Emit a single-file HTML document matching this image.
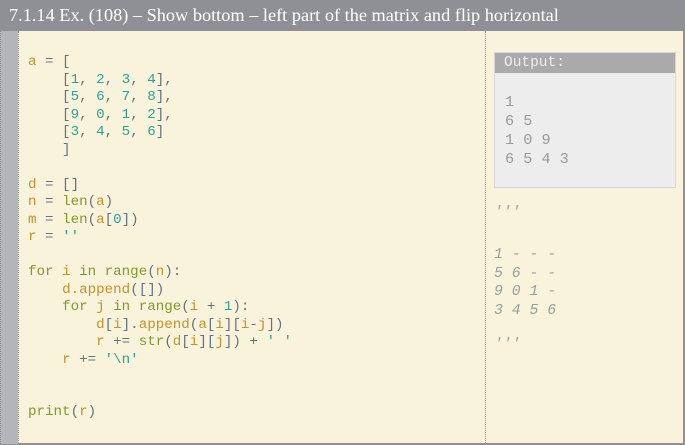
<!DOCTYPE html>
<html><head><style>
html,body{margin:0;padding:0;width:685px;height:445px;overflow:hidden;background:#fff;}
#wrap{position:absolute;left:0;top:0;width:685px;height:445px;background:#8f9095;}
#title{position:absolute;left:0;top:0;width:685px;height:31px;background:#8f9095;color:#fff;font-family:"Liberation Serif",serif;font-size:18.3px;line-height:31px;padding-left:9px;box-sizing:border-box;}
#gutter{position:absolute;left:0;top:31px;width:18px;height:413px;background:#b4b5b9;border-left:1px dotted #888;box-sizing:border-box;}
#code{position:absolute;left:18px;top:31px;width:467px;height:412px;background:#faf3dc;border-left:1px dotted #999;box-sizing:border-box;}
#right{position:absolute;left:485px;top:31px;width:198px;height:412px;background:#faf3dc;border-left:1px dotted #999;box-sizing:border-box;}
pre{margin:0;font-family:"Liberation Mono",monospace;}
#src{position:absolute;left:9px;top:23px;font-size:14.2px;line-height:17.5px;color:#5f7480;}
.k{color:#7f9a2a}.v{color:#c0922a}.n{color:#2aa198}
#out{position:absolute;left:8px;top:21px;width:182px;height:136px;background:#ededed;border:1px solid #d6d6d6;box-sizing:border-box;}
#outh{height:20px;background:#aaaaaa;color:#eee;font-family:"Liberation Mono",monospace;font-size:14.5px;line-height:20px;padding-left:9px;}
#outt{position:absolute;left:10px;top:40px;font-size:15.2px;line-height:19px;color:#999;}
.cm{position:absolute;left:8px;font-size:14.8px;line-height:18.5px;color:#93a1a1;font-style:italic;}
</style></head><body><div id="wrap">
<div id="title">7.1.14 Ex. (108) – Show bottom – left part of the matrix and flip horizontal</div>
<div id="gutter"></div>
<div id="code"><pre id="src"><span class="v">a</span> = [
    [<span class="n">1</span>, <span class="n">2</span>, <span class="n">3</span>, <span class="n">4</span>],
    [<span class="n">5</span>, <span class="n">6</span>, <span class="n">7</span>, <span class="n">8</span>],
    [<span class="n">9</span>, <span class="n">0</span>, <span class="n">1</span>, <span class="n">2</span>],
    [<span class="n">3</span>, <span class="n">4</span>, <span class="n">5</span>, <span class="n">6</span>]
    ]

<span class="v">d</span> = []
<span class="v">n</span> = <span class="k">len</span>(<span class="v">a</span>)
<span class="v">m</span> = <span class="k">len</span>(<span class="v">a</span>[<span class="n">0</span>])
<span class="v">r</span> = <span class="n">''</span>

<span class="k">for</span> <span class="v">i</span> <span class="k">in</span> <span class="k">range</span>(<span class="v">n</span>):
    <span class="v">d.append</span>([])
    <span class="k">for</span> <span class="v">j</span> <span class="k">in</span> <span class="k">range</span>(<span class="v">i</span> + <span class="n">1</span>):
        <span class="v">d</span>[<span class="v">i</span>].<span class="v">append</span>(<span class="v">a</span>[<span class="v">i</span>][<span class="v">i</span>-<span class="v">j</span>])
        <span class="v">r</span> += <span class="k">str</span>(<span class="v">d</span>[<span class="v">i</span>][<span class="v">j</span>]) + <span class="n">' '</span>
    <span class="v">r</span> += <span class="n">'\n'</span>


<span class="k">print</span>(<span class="v">r</span>)</pre></div>
<div id="right">
<div id="out"><div id="outh">Output:</div><pre id="outt">1
6 5
1 0 9
6 5 4 3</pre></div>
<pre class="cm" style="top:173px">'''</pre>
<pre class="cm" style="top:215px">1 - - -
5 6 - -
9 0 1 -
3 4 5 6</pre>
<pre class="cm" style="top:305px">'''</pre>
</div>
</div></body></html>
